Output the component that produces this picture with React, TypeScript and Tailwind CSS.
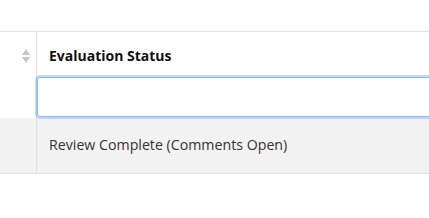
import React from 'react';

function SortIcon() {
  return (
    <svg width="10" height="16" viewBox="0 0 10 16" className="text-[#c4c4c4]">
      <path d="M5 1 L9 7 L1 7 Z" fill="currentColor" />
      <path d="M5 15 L9 9 L1 9 Z" fill="currentColor" />
    </svg>
  );
}

export default function App() {
  return (
    <div className="w-[429px] h-[218px] bg-white overflow-hidden text-[14px] text-[#222]" style={{ fontFamily: '"Open Sans", sans-serif' }}>
      <div className="h-[31px]" />
      <div className="border-t border-[#e0e0e0]">
        <div className="flex h-[45px]">
          <div className="w-[37px] shrink-0 border-r border-[#e0e0e0] flex items-center justify-end pr-[5px] pt-[2px]">
            <SortIcon />
          </div>
          <div className="flex-1 flex items-center pl-[12px] pt-[1px] font-bold text-[#111]">Evaluation Status</div>
        </div>
        <div className="flex h-[41px]">
          <div className="w-[37px] shrink-0 border-r border-[#e0e0e0]" />
          <div className="flex-1 pb-[1px]">
            <input
              className="w-[calc(100%+8px)] h-full border border-[#86b7fe] rounded-[3px] outline-none shadow-[0_0_0_2px_rgba(13,110,253,0.25)] bg-white"
              type="text"
            />
          </div>
        </div>
        <div className="flex h-[56px] bg-[#f2f2f2] border-b border-[#e0e0e0]">
          <div className="w-[37px] shrink-0 border-r border-[#e0e0e0]" />
          <div className="flex-1 flex items-center pl-[12px] pb-[2px] text-[14.2px] text-[#333]">Review Complete (Comments Open)</div>
        </div>
      </div>
    </div>
  );
}
